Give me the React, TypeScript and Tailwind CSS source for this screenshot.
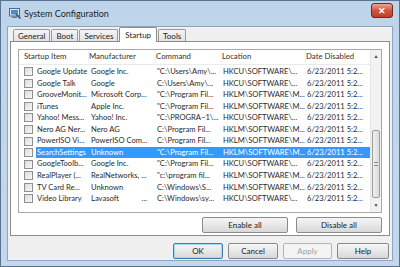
import React from "react";

type Row = {
  name: string;
  maker: string;
  command: string;
  location: string;
  date: string;
  selected?: boolean;
  makerDots?: boolean;
};

const rows: Row[] = [
  { name: "Google Update", maker: "Google Inc.", command: "\"C:\\Users\\Amy\\...", location: "HKCU\\SOFTWARE\\...", date: "6/23/2011 5:2..." },
  { name: "Google Talk", maker: "Google", command: "C:\\Users\\Amy\\...", location: "HKCU\\SOFTWARE\\...", date: "6/23/2011 5:2..." },
  { name: "GrooveMonit...", maker: "Microsoft Corp...", command: "\"C:\\Program Fil...", location: "HKLM\\SOFTWARE\\M...", date: "6/23/2011 5:2..." },
  { name: "iTunes", maker: "Apple Inc.", command: "\"C:\\Program Fil...", location: "HKLM\\SOFTWARE\\M...", date: "6/23/2011 5:2..." },
  { name: "Yahoo! Mess...", maker: "Yahoo! Inc.", command: "\"C:\\PROGRA~1\\...", location: "HKCU\\SOFTWARE\\...", date: "6/23/2011 5:2..." },
  { name: "Nero AG Ner...", maker: "Nero AG", command: "C:\\Program Fil...", location: "HKLM\\SOFTWARE\\M...", date: "6/23/2011 5:2..." },
  { name: "PowerISO Vi...", maker: "PowerISO Com...", command: "C:\\Program Fil...", location: "HKLM\\SOFTWARE\\M...", date: "6/23/2011 5:2..." },
  { name: "SearchSettings", maker: "Unknown", command: "\"C:\\Program Fil...", location: "HKLM\\SOFTWARE\\M...", date: "6/23/2011 5:2...", selected: true },
  { name: "GoogleToolb...", maker: "Google Inc.", command: "\"C:\\Program Fil...", location: "HKCU\\SOFTWARE\\...", date: "6/23/2011 5:2..." },
  { name: "RealPlayer (...", maker: "RealNetworks, ...", command: "\"c:\\program fil...", location: "HKLM\\SOFTWARE\\M...", date: "6/23/2011 5:2..." },
  { name: "TV Card Re...", maker: "Unknown", command: "C:\\Windows\\S...", location: "HKLM\\SOFTWARE\\M...", date: "6/23/2011 5:2..." },
  { name: "Video Library", maker: "Lavasoft", command: "C:\\Windows\\sy...", location: "HKCU\\SOFTWARE\\...", date: "6/23/2011 5:2...", makerDots: true },
];

const tabs = ["General", "Boot", "Services", "Startup", "Tools"];

function Btn({ label, w, focus, disabled }: { label: string; w: string; focus?: boolean; disabled?: boolean }) {
  return (
    <div
      className={`${w} h-[16px] rounded-[2px] border flex items-center justify-center text-[8px] ${
        focus ? "border-[#3c7fb1] shadow-[inset_0_0_0_1px_#9fd9f6]" : "border-[#8a8a8a]"
      } ${disabled ? "text-[#a0a0a0] border-[#b5b5b5] bg-[#f4f4f4]" : "text-[#222] bg-gradient-to-b from-[#f6f6f6] via-[#e8e8e8] to-[#d8d8d8]"}`}
    >
      {label}
    </div>
  );
}

export default function App() {
  return (
    <div
      className="w-[400px] h-[267px] flex flex-col bg-gradient-to-b from-[#bed4ea] to-[#c3d8ec] border border-[#5a7390] overflow-hidden"
      style={{ fontFamily: "Lato, 'Open Sans', sans-serif" }}
    >
      {/* title bar */}
      <div className="h-[25px] flex items-center pl-[8px] pr-[6px] shrink-0">
        <svg width="12" height="11" viewBox="0 0 12 11" className="mr-[3px]">
          <rect x="0.5" y="0.5" width="10" height="7.5" fill="#dfe9f5" stroke="#4a6a90" />
          <rect x="2" y="2" width="7" height="4.5" fill="#4d8ad0" />
          <rect x="3" y="8.5" width="5" height="1.5" fill="#6b7d92" />
          <path d="M7 6 L11.5 10.5" stroke="#2b4f7a" strokeWidth="1.5" />
        </svg>
        <span className="text-[9px] text-[#1e1e1e]">System Configuration</span>
        <div className="ml-auto w-[22px] h-[15px] -mt-[6px] rounded-[3px] border border-[#6b2a20] bg-gradient-to-b from-[#e9a595] via-[#d0553f] to-[#c13d24] flex items-center justify-center">
          <span className="text-white text-[9px] font-bold leading-none">✕</span>
        </div>
      </div>

      {/* client area */}
      <div className="mx-[6px] flex-1 mb-[5px] bg-[#f0f0f0] border border-[#8ea6c0] flex flex-col">
        {/* tabs */}
        <div className="flex items-end h-[14px] pl-[5px] shrink-0">
          {tabs.map((t) => {
            const sel = t === "Startup";
            return (
              <div
                key={t}
                className={`px-[4px] text-[8px] text-[#222] border border-b-0 rounded-t-[2px] mr-[1px] flex items-center ${
                  sel
                    ? "h-[15px] px-[5px] bg-white border-[#8c8c8c] relative z-10 -mb-[1px]"
                    : "h-[12px] border-[#9a9a9a] bg-gradient-to-b from-[#f4f4f4] to-[#e3e3e3]"
                }`}
              >
                {t}
              </div>
            );
          })}
        </div>

        {/* tab panel */}
        <div className="mx-[2px] h-[195px] bg-white border border-[#8c8c8c] flex flex-col px-[7px] pt-[7px]">
          <div className="h-[164px] border border-[#a8a8a8] flex">
            <div className="flex-1 flex flex-col">
              <div className="h-[15px] flex items-center text-[7.8px] text-[#333] border-b border-[#eaeaea]">
                <div className="w-[69px] pl-[5px]">Startup Item</div>
                <div className="w-[67px] border-l border-[#f0f0f0]">Manufacturer</div>
                <div className="w-[66px] border-l border-[#f0f0f0]">Command</div>
                <div className="w-[84px] border-l border-[#f0f0f0]">Location</div>
                <div className="flex-1 border-l border-[#f0f0f0]">Date Disabled</div>
              </div>
              <div className="flex flex-col pt-[1px]">
                {rows.map((r) => (
                  <div key={r.name} className="h-[11.55px] flex items-center text-[7.6px] text-[#2a2a2a] whitespace-nowrap">
                    <div className="w-[17px] flex justify-end pr-[3px]">
                      <div className="w-[9px] h-[9px] border border-[#8f8f8f] bg-gradient-to-br from-[#dcdcdc] to-[#f8f8f8]" />
                    </div>
                    <div className={`flex-1 flex items-center h-full ${r.selected ? "bg-[#3399ff] text-white" : ""}`}>
                      <div className="w-[54px] pl-[1px] overflow-hidden">{r.name}</div>
                      <div className="w-[66px] pl-[1px] overflow-hidden flex">
                        <span>{r.maker}</span>
                        {r.makerDots && <span className="ml-auto pr-[9px]">...</span>}
                      </div>
                      <div className="w-[66px] pl-[1px] overflow-hidden">{r.command}</div>
                      <div className="w-[84px] pl-[1px] overflow-hidden">{r.location}</div>
                      <div className="flex-1 pl-[1px] overflow-hidden">{r.date}</div>
                    </div>
                  </div>
                ))}
              </div>
            </div>
            {/* scrollbar */}
            <div className="w-[11px] flex flex-col bg-[#f2f2f2] border-l border-[#e6e6e6]">
              <div className="h-[14px] flex items-center justify-center text-[5px] text-[#444]">▲</div>
              <div className="flex-1 relative">
                <div className="absolute left-[1px] right-[1px] top-[66px] h-[68px] rounded-[2px] border border-[#9c9c9c] bg-gradient-to-r from-[#f0f0f0] to-[#dcdcdc] flex items-center justify-center">
                  <div className="w-[4px] h-[4px] border-y border-[#888]" />
                </div>
              </div>
              <div className="h-[12px] flex items-center justify-center text-[5px] text-[#444]">▼</div>
            </div>
          </div>
          <div className="flex justify-end gap-[8px] mt-[4px]">
            <Btn label="Enable all" w="w-[86px]" />
            <Btn label="Disable all" w="w-[86px]" />
          </div>
        </div>

        {/* bottom buttons */}
        <div className="flex justify-end gap-[5px] mt-[7px] pr-[3px]">
          <Btn label="OK" w="w-[50px]" focus />
          <Btn label="Cancel" w="w-[50px]" />
          <Btn label="Apply" w="w-[49px]" disabled />
          <Btn label="Help" w="w-[52px]" />
        </div>
      </div>
    </div>
  );
}
